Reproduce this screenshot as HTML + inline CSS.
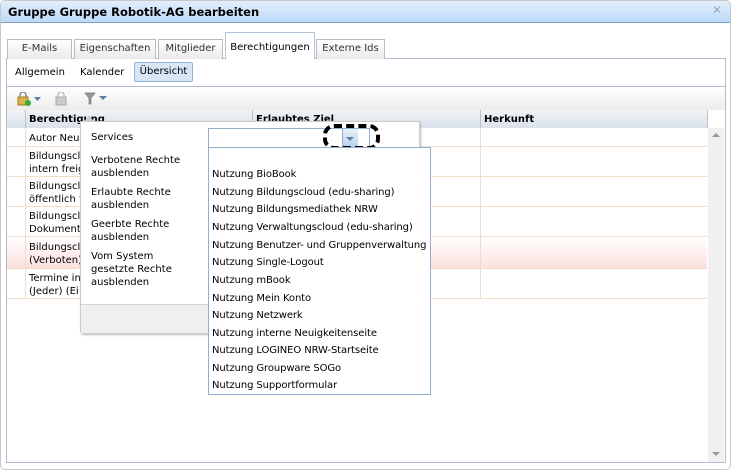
<!DOCTYPE html>
<html><head><meta charset="utf-8"><style>
*{box-sizing:border-box;margin:0;padding:0}
body{width:731px;height:470px;background:#fff;font-family:"DejaVu Sans","Liberation Sans",sans-serif;font-size:10px;color:#000;position:relative;overflow:hidden}
.a{position:absolute}
.win{left:0;top:0;width:731px;height:470px;border:1px solid #c8c8c8;border-radius:5px;background:#fff}
.title{left:1px;top:1px;width:729px;height:22px;background:linear-gradient(#e4effc,#bcdaf8);border-bottom:1px solid #7c9fc6;border-radius:4px 4px 0 0}
.title span{position:absolute;left:7px;top:4px;font-weight:bold;font-size:11.5px;color:#000}
.x{right:9px;top:3px;color:#a0a8b4;font-weight:bold;font-size:12px}
.tab{top:39px;height:20px;border:1px solid #b4bcc8;border-bottom:none;background:linear-gradient(#fff,#eaeaea);color:#333;text-align:center;line-height:18px}
.tab.on{top:32px;height:27px;background:#fff;border-color:#b4c4d8;line-height:30px;color:#000}
.cell{color:#000;line-height:13px}
.row{left:7px;width:700px;border-bottom:1px solid #efdccb}
.vl{width:1px;background:#efdccb}
.li{left:212px;color:#000;letter-spacing:-0.1px}
</style></head><body>
<div class="a win"></div>
<div class="a title"><span>Gruppe Gruppe Robotik-AG bearbeiten</span></div>
<div class="a x">✕</div>
<div class="a" style="left:6px;top:58px;width:720px;height:405px;border:1px solid #b0bccb"></div>
<div class="a tab" style="left:7px;width:65px">E-Mails</div>
<div class="a tab" style="left:74px;width:82px">Eigenschaften</div>
<div class="a tab" style="left:158px;width:65px">Mitglieder</div>
<div class="a tab on" style="left:225px;width:90px">Berechtigungen</div>
<div class="a tab" style="left:316px;width:69px">Externe Ids</div>
<div class="a" style="left:226px;top:58px;width:88px;height:2px;background:#fff"></div>
<div class="a" style="left:15px;top:67px">Allgemein</div>
<div class="a" style="left:80px;top:67px">Kalender</div>
<div class="a" style="left:134px;top:62px;width:59px;height:20px;border:1px solid #94b3d6;background:#d8e6f6;border-radius:2px;text-align:center;line-height:18px">Übersicht</div>
<div class="a" style="left:7px;top:86px;width:718px;height:1px;background:#b0bccb"></div>
<div class="a" style="left:7px;top:87px;width:718px;height:23px;background:linear-gradient(#fff,#ececec)"></div>
<svg class="a" style="left:17px;top:92px" width="30" height="14"><rect x="1" y="5" width="10" height="8" fill="#d8b448" stroke="#a07a20"/><path d="M3 5V3a3 3 0 0 1 6 0v2" fill="none" stroke="#888" stroke-width="1.5"/><circle cx="11" cy="11" r="3" fill="#3aa83a"/><path d="M17 5h7l-3.5 4z" fill="#5a7ea8"/></svg>
<svg class="a" style="left:55px;top:92px" width="14" height="14"><rect x="1" y="5" width="10" height="8" fill="#ccc" stroke="#aaa"/><path d="M3 5V3a3 3 0 0 1 6 0v2" fill="none" stroke="#bbb" stroke-width="1.5"/></svg>
<svg class="a" style="left:84px;top:92px" width="28" height="14"><path d="M1 1h10l-4 5v6h-2v-6z" fill="#999" stroke="#777" stroke-width=".7"/><path d="M15 4h8l-4 4z" fill="#5a7ea8"/></svg>
<div class="a" style="left:7px;top:110px;width:700px;height:18px;background:linear-gradient(#f1f4f8,#d9e1ea)"></div>
<div class="a" style="left:25px;top:110px;width:1px;height:18px;background:#c0c0c0"></div>
<div class="a" style="left:252px;top:110px;width:1px;height:18px;background:#c0c0c0"></div>
<div class="a" style="left:480px;top:110px;width:1px;height:18px;background:#c0c0c0"></div>
<div class="a" style="left:707px;top:110px;width:1px;height:18px;background:#c0c0c0"></div>
<div class="a" style="left:29px;top:114px;font-weight:bold">Berechtigung</div>
<div class="a" style="left:256px;top:114px;font-weight:bold">Erlaubtes Ziel</div>
<div class="a" style="left:484px;top:114px;font-weight:bold">Herkunft</div>
<div class="a" style="left:708px;top:128px;width:16px;height:334px;background:#f0f0f0"></div>
<div class="a" style="left:712px;top:133px;width:0;height:0;border:4px solid transparent;border-bottom-color:#999;border-top:none"></div>
<div class="a" style="left:712px;top:452px;width:0;height:0;border:4px solid transparent;border-top-color:#999;border-bottom:none"></div>
<div class="a row" style="top:128px;height:19px"></div>
<div class="a row" style="top:147px;height:30px"></div>
<div class="a row" style="top:177px;height:30px"></div>
<div class="a row" style="top:207px;height:30px"></div>
<div class="a row" style="top:237px;height:32px;background:linear-gradient(#fff,#fde0e0)"></div>
<div class="a row" style="top:269px;height:30px"></div>
<div class="a vl" style="left:25px;top:128px;height:171px"></div>
<div class="a vl" style="left:480px;top:128px;height:171px"></div>
<div class="a cell" style="left:29px;top:132px">Autor Neuigkeiten</div>
<div class="a cell" style="left:29px;top:150px">Bildungscloud<br>intern freig</div>
<div class="a cell" style="left:29px;top:180px">Bildungscloud<br>öffentlich f</div>
<div class="a cell" style="left:29px;top:210px">Bildungscloud<br>Dokument</div>
<div class="a cell" style="left:29px;top:241px">Bildungscloud<br>(Verboten)</div>
<div class="a cell" style="left:29px;top:272px">Termine in<br>(Jeder) (Ei</div>
<div class="a" style="left:80px;top:121px;width:340px;height:213px;background:#fff;border:1px solid #c8ccd2;border-radius:0 0 3px 3px;box-shadow:1px 1px 2px #bbb"></div>
<div class="a" style="left:81px;top:304px;width:338px;height:29px;background:#efefef;border-top:1px solid #d4d4d4"></div>
<div class="a" style="left:84px;top:116px;width:0;height:0;border:5px solid transparent;border-bottom-color:#c8ccd2;border-top:none"></div>
<div class="a cell" style="left:91px;top:131px">Services</div>
<div class="a cell" style="left:91px;top:154px">Verbotene Rechte<br>ausblenden</div>
<div class="a cell" style="left:91px;top:186px">Erlaubte Rechte<br>ausblenden</div>
<div class="a cell" style="left:91px;top:218px">Geerbte Rechte<br>ausblenden</div>
<div class="a cell" style="left:91px;top:250px">Vom System<br>gesetzte Rechte<br>ausblenden</div>
<div class="a" style="left:208px;top:128px;width:162px;height:20px;border:1px solid #94aed0;background:#fff"></div>
<div class="a" style="left:342px;top:129px;width:16px;height:18px;background:linear-gradient(#e6f0fb,#b9d2ee);border-left:1px solid #94aed0"></div>
<div class="a" style="left:346px;top:137px;width:0;height:0;border:4px solid transparent;border-top-color:#5a7ea8;border-bottom:none"></div>
<div class="a" style="left:323px;top:124px;width:57px;height:26px;border:4px dashed #000;border-radius:11px"></div>
<div class="a" style="left:208px;top:147px;width:223px;height:248px;border:1px solid #94aed0;background:#fff"></div>
<div class="a li" style="top:169px">Nutzung BioBook</div>
<div class="a li" style="top:186.5px">Nutzung Bildungscloud (edu-sharing)</div>
<div class="a li" style="top:204px">Nutzung Bildungsmediathek NRW</div>
<div class="a li" style="top:222px">Nutzung Verwaltungscloud (edu-sharing)</div>
<div class="a li" style="top:239.5px">Nutzung Benutzer- und Gruppenverwaltung</div>
<div class="a li" style="top:257px">Nutzung Single-Logout</div>
<div class="a li" style="top:275px">Nutzung mBook</div>
<div class="a li" style="top:292.5px">Nutzung Mein Konto</div>
<div class="a li" style="top:310px">Nutzung Netzwerk</div>
<div class="a li" style="top:327.5px">Nutzung interne Neuigkeitenseite</div>
<div class="a li" style="top:345px">Nutzung LOGINEO NRW-Startseite</div>
<div class="a li" style="top:362.5px">Nutzung Groupware SOGo</div>
<div class="a li" style="top:380px">Nutzung Supportformular</div>
</body></html>
